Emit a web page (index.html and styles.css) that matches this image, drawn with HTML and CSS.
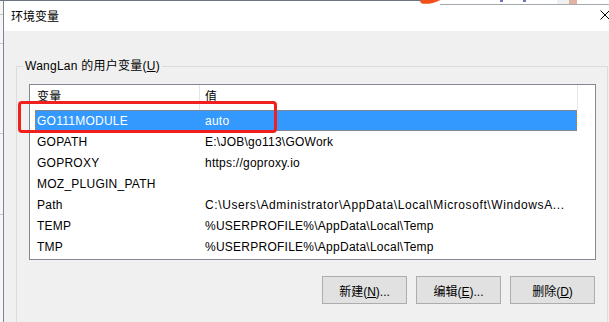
FILE: index.html
```html
<!DOCTYPE html>
<html lang="zh-CN">

<head>
 <meta charset="UTF-8">
 <meta name="viewport" content="width=device-width, initial-scale=1.0">
 <title>环境变量</title>
 <link rel="stylesheet" href="styles.css">
</head>

<body>
 <div class="desk">
  <!-- sliver of the window behind the dialog -->
  <div class="strip">
   <div class="seg seg1"></div>
   <div class="seg seg2"></div>
   <div class="seg seg3"></div>
   <div class="seg seg4"></div>
  </div>

  <div class="dialog">
   <div class="titlebar">
    <span class="title">环境变量</span>
    <svg class="close" width="10" height="10" viewBox="0 0 10 10">
     <path d="M0.5 0.5 L9.5 9.5 M9.5 0.5 L0.5 9.5" stroke="#000" stroke-width="1" fill="none" />
    </svg>
   </div>

   <div class="client">
    <fieldset class="group">
     <legend>WangLan 的用户变量(<u>U</u>)</legend>

     <div class="listview">
      <div class="lv-head">
       <div class="col">变量</div>
       <div class="col">值</div>
       <div class="col"></div>
      </div>
      <div class="lv-row selected">
       <div>GO111MODULE</div>
       <div>auto</div>
      </div>
      <div class="lv-row">
       <div>GOPATH</div>
       <div>E:\JOB\go113\GOWork</div>
      </div>
      <div class="lv-row">
       <div>GOPROXY</div>
       <div>https://goproxy.io</div>
      </div>
      <div class="lv-row">
       <div>MOZ_PLUGIN_PATH</div>
       <div></div>
      </div>
      <div class="lv-row">
       <div>Path</div>
       <div class="wide">C:\Users\Administrator\AppData\Local\Microsoft\WindowsA...</div>
      </div>
      <div class="lv-row">
       <div>TEMP</div>
       <div>%USERPROFILE%\AppData\Local\Temp</div>
      </div>
      <div class="lv-row">
       <div>TMP</div>
       <div>%USERPROFILE%\AppData\Local\Temp</div>
      </div>
     </div>

     <div class="buttons">
      <button>新建(<u>N</u>)...</button>
      <button>编辑(<u>E</u>)...</button>
      <button>删除(<u>D</u>)</button>
     </div>
    </fieldset>
   </div>
  </div>
 </div>

 <!-- screenshot leftovers and the red annotation box -->
 <div class="edge-left"></div>
 <div class="swoosh"></div>
 <div class="edge-right"></div>
 <div class="speck speck1"></div>
 <div class="speck speck2"></div>
 <div class="speck speck3"></div>
 <div class="mark"></div>
</body>

</html>
```

FILE: styles.css
```css
body {
 margin: 0;
 width: 609px;
 height: 322px;
 overflow: hidden;
 position: relative;
 background-color: #fff;
 font-family: "Liberation Sans", "Noto Sans CJK SC", sans-serif;
 font-size: 12px;
 letter-spacing: 0.25px;
 color: #000;
}

.desk {
 display: flex;
 height: 322px;
}

.strip {
 width: 3px;
 background-color: #f6f6f6;
}

.seg {
 border-bottom: 1px solid #c8c8c8;
}

.seg1 {
 height: 14px;
}

.seg2 {
 height: 28px;
}

.seg3 {
 height: 89px;
}

.seg4 {
 height: 80px;
}

.dialog {
 flex: 1;
 display: flex;
 flex-direction: column;
 border-left: 1px solid #7f8590;
}

.titlebar {
 flex-shrink: 0;
 height: 31px;
 display: flex;
 align-items: center;
 justify-content: space-between;
 padding-left: 7px;
 background-color: #fff;
}

.title {
 font-family: "Noto Sans CJK SC", sans-serif;
 letter-spacing: 0;
}

.close {
 margin-bottom: 2px;
 margin-right: -1px;
}

.client {
 flex: 1;
 overflow: hidden;
 background-color: #f0f0f0;
 padding: 28px 0 0 12px;
}

.group {
 box-sizing: border-box;
 width: 592px;
 height: 263px;
 margin: 0;
 border: 1px solid #dcdcdc;
 border-bottom: none;
 padding: 11px 11px 0 12px;
}

.group legend {
 line-height: 14px;
 padding: 0 2px;
 margin-left: -6px;
}

.listview {
 height: 174px;
 background-color: #fff;
 border: 1px solid #828790;
}

.lv-head {
 display: grid;
 grid-template-columns: 170px 378px 1fr;
 height: 25px;
 line-height: 25px;
}

.lv-head .col {
 border-right: 1px solid #e5e5e5;
 padding-left: 5px;
}

.lv-head .col:first-child {
 padding-left: 7px;
}

.lv-head .col:last-child {
 border-right: none;
}

.lv-row {
 display: grid;
 grid-template-columns: 164px 1fr;
 width: 542px;
 height: 21px;
 line-height: 22px;
 margin-left: 5px;
 white-space: nowrap;
}

.lv-row div {
 overflow: hidden;
 padding-left: 6px;
}

.lv-row div:first-child {
 padding-left: 2px;
}

.lv-row .wide {
 letter-spacing: 0.6px;
}

.lv-row.selected {
 background-color: #3399ff;
 color: #fff;
 outline: 1px dotted #c8782c;
 outline-offset: -1px;
}

.buttons {
 display: flex;
 justify-content: flex-end;
 gap: 9px;
 margin-top: 16px;
 margin-right: 1px;
}

.buttons button {
 width: 85px;
 height: 28px;
 padding: 0;
 background-color: #e1e1e1;
 border: 1px solid #adadad;
 font: inherit;
 color: #000;
}

/* overlays */
.edge-left {
 position: absolute;
 left: 0;
 top: 0;
 width: 423px;
 height: 1px;
 background-color: #6e7380;
}

.edge-right {
 position: absolute;
 left: 440px;
 top: 4px;
 width: 169px;
 height: 1px;
 background-color: #a5a9b0;
}

.swoosh {
 position: absolute;
 left: 420px;
 top: -5px;
 width: 24px;
 height: 8px;
 border-radius: 50%;
 background-color: #f2501a;
 transform: rotate(-14deg);
}

.speck {
 position: absolute;
 top: 0;
 height: 2px;
}

.speck1 {
 left: 500px;
 width: 3px;
 background-color: #6a74c2;
}

.speck2 {
 left: 523px;
 width: 3px;
 background-color: #6a74c2;
}

.speck3 {
 left: 557px;
 width: 20px;
 height: 4px;
 background-color: #eef0f2;
 box-shadow: inset -8px 0 0 #e3b3a2;
}

.mark {
 position: absolute;
 left: 18px;
 top: 101px;
 width: 259px;
 height: 32px;
 box-sizing: border-box;
 border: 3px solid #f21f1f;
 border-radius: 4px;
}
```
